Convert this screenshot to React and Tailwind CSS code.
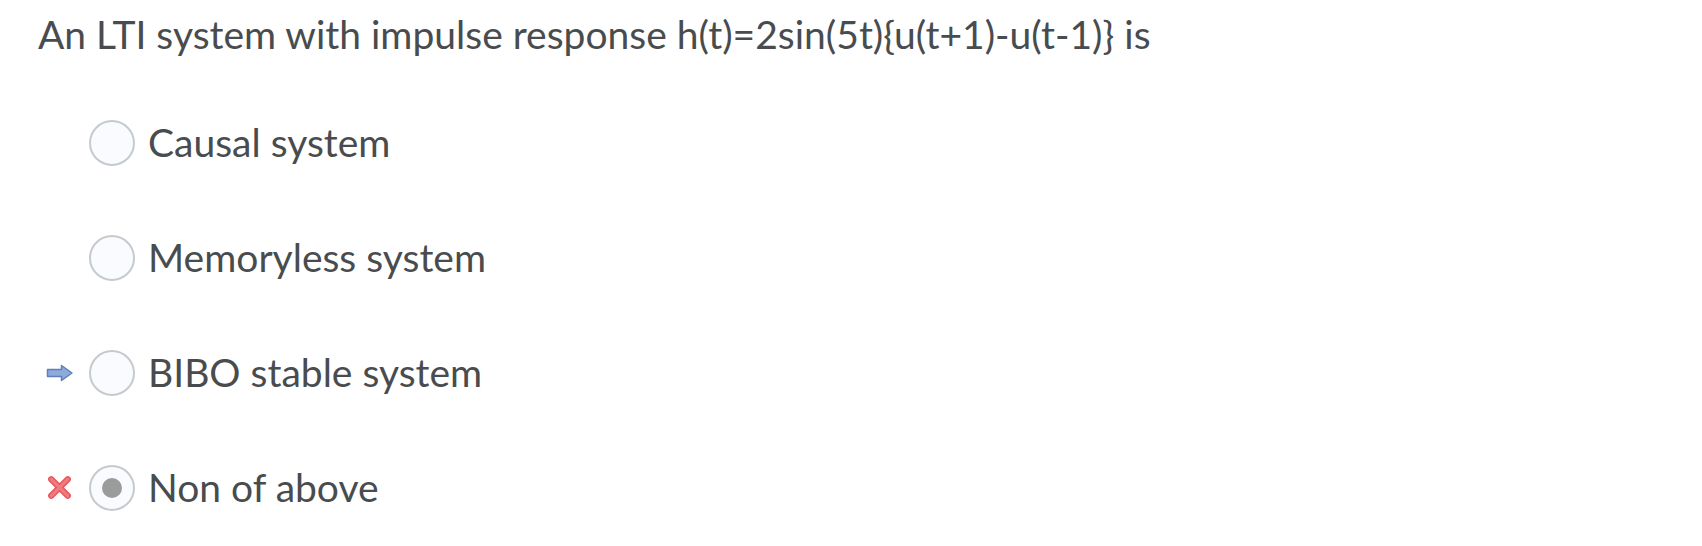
import React from "react";

function Arrow() {
  return (
    <svg width="28" height="18" viewBox="0 0 28 18">
      <path d="M1.5 5.5 H15.5 V1.5 L26 9 L15.5 16.5 V12.5 H1.5 Z" fill="#8eaadb" stroke="#5e7fb8" strokeWidth="1.5" strokeLinejoin="round" />
    </svg>
  );
}

function Cross() {
  return (
    <svg width="27" height="27" viewBox="0 0 26 26">
      <path d="M5 5 L21 21 M21 5 L5 21" stroke="#e8585e" strokeWidth="6" strokeLinecap="round" />
      <path d="M5 5 L21 21 M21 5 L5 21" stroke="#f07a7e" strokeWidth="3" strokeLinecap="round" />
    </svg>
  );
}

function Option({ label, marker, selected }) {
  return (
    <div className="flex items-center h-[115px]">
      <div className="w-[89px] flex items-center justify-start pl-[46px]">{marker}</div>
      <div className="w-[46px] h-[46px] rounded-full border-2 border-[#c6cacd] bg-[#f9fbff] flex items-center justify-center">
        {selected && <div className="w-[20px] h-[20px] rounded-full bg-[#9b9b9b]" />}
      </div>
      <div className="ml-[13px] text-[39px] text-[#494c4e]">{label}</div>
    </div>
  );
}

export default function App() {
  return (
    <div className="w-[1702px] h-[546px] bg-white overflow-hidden" style={{ fontFamily: "Lato, 'Noto Sans', sans-serif" }}>
      <div className="pl-[38px] pt-[10px] text-[39px] text-[#494c4e] leading-[48px]">
        An LTI system with impulse response h(t)=2sin(5t){"{"}u(t+1)-u(t-1){"}"} is
      </div>
      <div className="pt-[27px]">
        <Option label="Causal system" />
        <Option label="Memoryless system" />
        <Option label="BIBO stable system" marker={<Arrow />} />
        <Option label="Non of above" marker={<Cross />} selected />
      </div>
    </div>
  );
}
